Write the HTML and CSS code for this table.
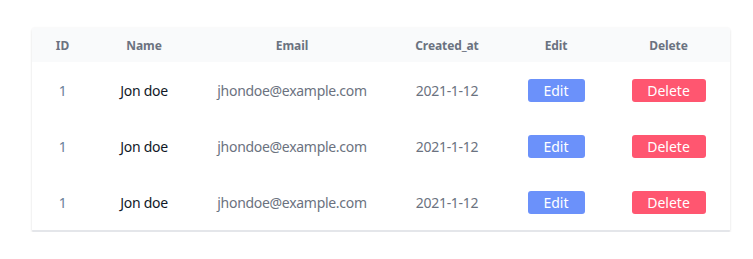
FILE: index.html
```html
<!DOCTYPE html>
<html>
<head>
<meta charset="utf-8">
<link rel="stylesheet" href="styles.css">
</head>
<body>
<div class="wrap">
  <div class="card">
    <table class="tbl">
      <colgroup>
        <col class="c1"><col class="c2"><col class="c3"><col class="c4"><col class="c5"><col class="c6">
      </colgroup>
      <thead>
        <tr><th>ID</th><th>Name</th><th>Email</th><th>Created_at</th><th>Edit</th><th>Delete</th></tr>
      </thead>
      <tbody>
        <tr><td class="id">1</td><td class="name">Jon doe</td><td class="muted">jhondoe@example.com</td><td class="muted">2021-1-12</td><td><span class="btn edit">Edit</span></td><td><span class="btn del">Delete</span></td></tr>
        <tr><td class="id">1</td><td class="name">Jon doe</td><td class="muted">jhondoe@example.com</td><td class="muted">2021-1-12</td><td><span class="btn edit">Edit</span></td><td><span class="btn del">Delete</span></td></tr>
        <tr><td class="id">1</td><td class="name">Jon doe</td><td class="muted">jhondoe@example.com</td><td class="muted">2021-1-12</td><td><span class="btn edit">Edit</span></td><td><span class="btn del">Delete</span></td></tr>
      </tbody>
    </table>
  </div>
</div>
</body>
</html>
```
FILE: styles.css
```css
html, body { margin: 0; padding: 0; background: #fff; }
body { font-family: "Noto Sans", "Open Sans", sans-serif; }
.wrap { padding: 28px 0 0 32px; }
.card {
  width: 698px;
  background: #fff;
  border-radius: 2px;
  border-bottom: 2px solid #e4e6ea;
  box-shadow: 0 2px 3px rgba(0,0,0,0.08), 0 0 2px rgba(0,0,0,0.08);
  overflow: hidden;
}
.tbl { width: 698px; border-collapse: collapse; table-layout: fixed; }
.c1 { width: 61px; } .c2 { width: 102px; } .c3 { width: 194px; }
.c4 { width: 116px; } .c5 { width: 102px; } .c6 { width: 123px; }
thead tr { background: #f9fafb; }
th {
  height: 34px; padding: 0; text-align: center;
  font-size: 12px; font-weight: 700; color: #6b7280; letter-spacing: -0.1px;
}
td {
  height: 56px; padding: 0; text-align: center;
  font-size: 14px; color: #6b7280; letter-spacing: -0.3px;
}
td.id { color: #6b7e99; }
td.name { color: #111827; }
.btn {
  display: inline-block; height: 23px; line-height: 23px; border-radius: 3px;
  color: #fff; font-size: 14px; letter-spacing: 0;
}
.edit { background: #6b91fa; width: 57px; }
.del { background: #ff5670; width: 74px; }
```
